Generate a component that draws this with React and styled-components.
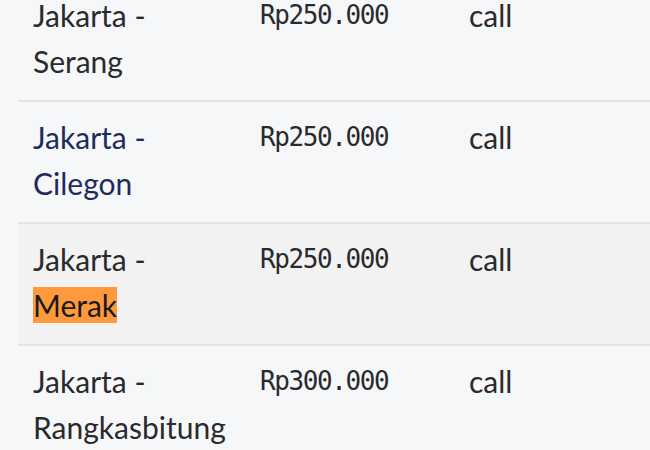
import React from "react";
import styled, { createGlobalStyle } from "styled-components";

const Global = createGlobalStyle`
  html, body {
    margin: 0;
    padding: 0;
    background: #f6f7f9;
    overflow: hidden;
  }
`;

const Page = styled.div`
  width: 650px;
  height: 450px;
  overflow: hidden;
  background: #f6f7f9;
  padding-left: 18px;
  box-sizing: border-box;
`;

const Table = styled.table`
  border-collapse: collapse;
  margin-top: -20px;
  width: 700px;
  table-layout: fixed;
  font-family: Lato, "Noto Sans", sans-serif;
  font-size: 30px;
  color: #2a2a2c;
`;

const Row = styled.tr`
  background: ${(p) => (p.$shaded ? "#f2f2f2" : "transparent")};
  border-bottom: 2px solid #e3e4e6;
`;

const Cell = styled.td`
  vertical-align: top;
  padding: 12px 15px 16px;
  height: 92px;
  line-height: 46px;
  color: ${(p) => (p.$link ? "#1f2b5c" : "inherit")};
  font-family: ${(p) => (p.$mono ? '"DejaVu Sans Mono", monospace' : "inherit")};
  font-size: ${(p) => (p.$mono ? "26px" : "inherit")};
  letter-spacing: ${(p) => (p.$mono ? "-1.4px" : "normal")};
`;

const Mark = styled.mark`
  background: #ff9a3c;
  color: #1a1a1a;
`;

const rows = [
  { a: "Jakarta -", b: "Serang", price: "Rp250.000" },
  { a: "Jakarta -", b: "Cilegon", price: "Rp250.000", link: true },
  { a: "Jakarta -", b: "Merak", price: "Rp250.000", shaded: true, mark: true },
  { a: "Jakarta -", b: "Rangkasbitung", price: "Rp300.000" },
];

export default function App() {
  return (
    <Page>
      <Global />
      <Table>
        <colgroup>
          <col style={{ width: 227 }} />
          <col style={{ width: 209 }} />
          <col />
        </colgroup>
        <tbody>
          {rows.map((r, i) => (
            <Row key={i} $shaded={r.shaded}>
              <Cell $link={r.link}>
                {r.a}
                <br />
                {r.mark ? <Mark>{r.b}</Mark> : r.b}
              </Cell>
              <Cell $mono>{r.price}</Cell>
              <Cell>call</Cell>
            </Row>
          ))}
        </tbody>
      </Table>
    </Page>
  );
}
